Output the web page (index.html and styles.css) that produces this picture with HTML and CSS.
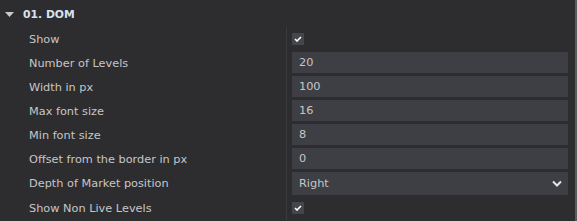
FILE: index.html
```html
<!DOCTYPE html>
<html lang="en">
<head>
  <meta charset="UTF-8" />
  <title>Settings</title>
  <link rel="stylesheet" href="styles.css">
</head>
<body>
  <div class="panel">
    <div class="group-head">
      <svg class="caret" width="9" height="5" viewBox="0 0 9 5"><path d="M0 0H9L4.5 5Z" fill="#c9c9cc"/></svg>
      <span class="group-title">01. DOM</span>
    </div>
    <div class="props">
      <div class="row">
        <div class="label">Show</div>
        <div class="value"><span class="check"><svg width="8" height="6" viewBox="0 0 8 6"><path d="M1 3L3 5L7 1" stroke="#fff" stroke-width="1.6" fill="none"/></svg></span></div>
      </div>
      <div class="row">
        <div class="label">Number of Levels</div>
        <div class="value"><div class="input">20</div></div>
      </div>
      <div class="row">
        <div class="label">Width in px</div>
        <div class="value"><div class="input">100</div></div>
      </div>
      <div class="row">
        <div class="label">Max font size</div>
        <div class="value"><div class="input">16</div></div>
      </div>
      <div class="row">
        <div class="label">Min font size</div>
        <div class="value"><div class="input">8</div></div>
      </div>
      <div class="row">
        <div class="label">Offset from the border in px</div>
        <div class="value"><div class="input">0</div></div>
      </div>
      <div class="row row-select">
        <div class="label">Depth of Market position</div>
        <div class="value">
          <div class="input select">
            <span>Right</span>
            <svg width="10" height="7" viewBox="0 0 10 7"><path d="M1 1.5L5 5.5L9 1.5" stroke="#e6e6e8" stroke-width="2" fill="none"/></svg>
          </div>
        </div>
      </div>
      <div class="row">
        <div class="label">Show Non Live Levels</div>
        <div class="value"><span class="check"><svg width="8" height="6" viewBox="0 0 8 6"><path d="M1 3L3 5L7 1" stroke="#fff" stroke-width="1.6" fill="none"/></svg></span></div>
      </div>
    </div>
    <div class="scrollbar"></div>
  </div>
</body>
</html>
```

FILE: styles.css
```css
body {
  margin: 0;
  background: #2d2d30;
  font-family: "DejaVu Sans", sans-serif;
  font-size: 11.3px;
  color: #c6c6c9;
}
.panel {
  position: relative;
  width: 577px;
  height: 221px;
  overflow: hidden;
}
.group-head {
  display: flex;
  align-items: center;
  height: 27px;
  padding-left: 5px;
  padding-top: 2px;
  box-sizing: border-box;
}
.caret {
  margin-right: 9px;
}
.group-title {
  font-weight: bold;
  color: #d6e2ee;
  font-size: 10.8px;
}
.props {
  padding-right: 9px;
}
.row {
  display: flex;
  align-items: center;
  height: 24px;
}
.row-select {
  height: 25px;
}
.label {
  width: 257px;
  padding-left: 29px;
}
.value {
  flex: 1;
  display: flex;
  align-items: flex-start;
  height: 100%;
  border-left: 1px solid #3b3b3f;
  padding-left: 5px;
}
.check {
  width: 12px;
  height: 12px;
  margin-top: 6px;
  background: #45454c;
  display: flex;
  align-items: center;
  justify-content: center;
}
.input {
  flex: 1;
  height: 21px;
  line-height: 21px;
  margin-top: 1px;
  background: #3e3e45;
  padding-left: 7px;
}
.select {
  height: 23px;
  line-height: 23px;
  display: flex;
  justify-content: space-between;
  align-items: center;
  padding-right: 6px;
}
.scrollbar {
  position: absolute;
  right: 0;
  top: 0;
  width: 2px;
  height: 221px;
  background: #5a5a5e;
}
```
